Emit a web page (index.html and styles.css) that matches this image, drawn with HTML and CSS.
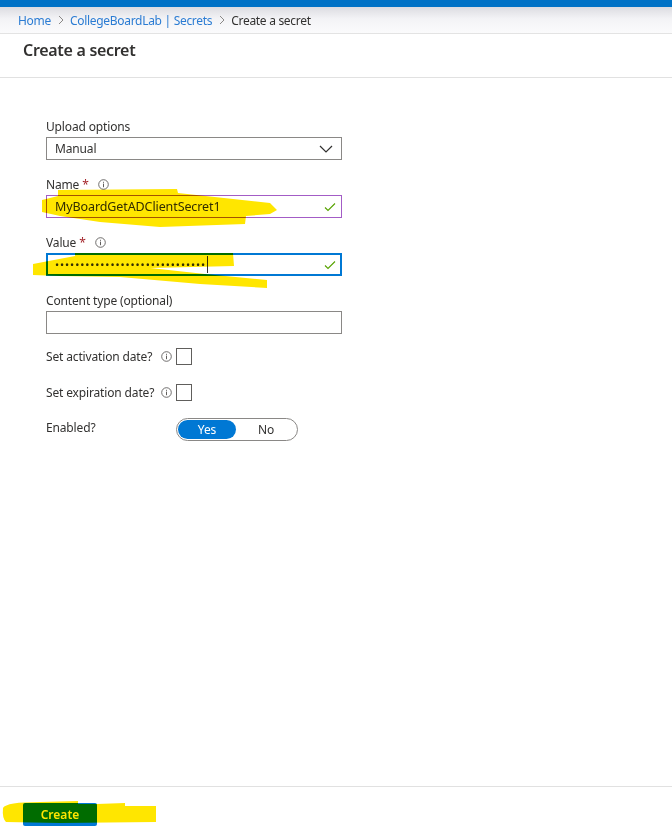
FILE: index.html
```html
<!DOCTYPE html>
<html>
<head>
<meta charset="utf-8">
<link rel="stylesheet" href="styles.css">
</head>
<body>
<div class="page">
  <div class="topbar"></div>
  <nav class="breadcrumb">
    <a class="crumb">Home</a>
    <svg class="sep" width="8" height="10" viewBox="0 0 8 10"><path d="M2 1l4 4-4 4" fill="none" stroke="#8a8886" stroke-width="1"/></svg>
    <a class="crumb">CollegeBoardLab | Secrets</a>
    <svg class="sep" width="8" height="10" viewBox="0 0 8 10"><path d="M2 1l4 4-4 4" fill="none" stroke="#8a8886" stroke-width="1"/></svg>
    <span class="current">Create a secret</span>
  </nav>
  <header class="header">
    <h1 class="title">Create a secret</h1>
  </header>
  <main class="form">
    <div class="field">
      <label class="label">Upload options</label>
      <div class="input select">
        <span>Manual</span>
        <svg width="14" height="8" viewBox="0 0 14 8"><path d="M1 1l6 6 6-6" fill="none" stroke="#323130" stroke-width="1.2"/></svg>
      </div>
    </div>
    <div class="field">
      <label class="label">Name <span class="req">*</span> <svg class="info" width="11" height="11" viewBox="0 0 11 11"><circle cx="5.5" cy="5.5" r="4.8" fill="none" stroke="#605e5c" stroke-width="0.9"/><rect x="5" y="4.6" width="1" height="3.6" fill="#605e5c"/><rect x="5" y="2.8" width="1" height="1" fill="#605e5c"/></svg></label>
      <div class="input name">
        <span>MyBoardGetADClientSecret1</span>
        <svg width="12" height="10" viewBox="0 0 12 10"><path d="M1 5.5l3 3 7-7" fill="none" stroke="#57a300" stroke-width="1.1"/></svg>
      </div>
    </div>
    <div class="field">
      <label class="label">Value <span class="req">*</span> <svg class="info" width="11" height="11" viewBox="0 0 11 11"><circle cx="5.5" cy="5.5" r="4.8" fill="none" stroke="#605e5c" stroke-width="0.9"/><rect x="5" y="4.6" width="1" height="3.6" fill="#605e5c"/><rect x="5" y="2.8" width="1" height="1" fill="#605e5c"/></svg></label>
      <div class="input value">
        <span class="dots">••••••••••••••••••••••••••••••</span><span class="caret"></span>
        <svg class="check" width="12" height="10" viewBox="0 0 12 10"><path d="M1 5.5l3 3 7-7" fill="none" stroke="#57a300" stroke-width="1.1"/></svg>
      </div>
    </div>
    <div class="field">
      <label class="label">Content type (optional)</label>
      <div class="input"></div>
    </div>
    <div class="row first">
      <div class="rowlabel"><span>Set activation date?</span><svg class="info" width="11" height="11" viewBox="0 0 11 11"><circle cx="5.5" cy="5.5" r="4.8" fill="none" stroke="#605e5c" stroke-width="0.9"/><rect x="5" y="4.6" width="1" height="3.6" fill="#605e5c"/><rect x="5" y="2.8" width="1" height="1" fill="#605e5c"/></svg></div>
      <div class="checkbox"></div>
    </div>
    <div class="row">
      <div class="rowlabel"><span>Set expiration date?</span><svg class="info" width="11" height="11" viewBox="0 0 11 11"><circle cx="5.5" cy="5.5" r="4.8" fill="none" stroke="#605e5c" stroke-width="0.9"/><rect x="5" y="4.6" width="1" height="3.6" fill="#605e5c"/><rect x="5" y="2.8" width="1" height="1" fill="#605e5c"/></svg></div>
      <div class="checkbox"></div>
    </div>
    <div class="row toggle-row">
      <div class="rowlabel"><span>Enabled?</span></div>
      <div class="toggle"><span class="opt on">Yes</span><span class="opt">No</span></div>
    </div>
  </main>
  <footer class="footer">
    <button class="create">Create</button>
  </footer>
  <svg class="marker" width="672" height="838" viewBox="0 0 672 838">
    <path d="M58 190 L177 189 L178 193 L270 203 L277 210 L270 214 L246 216 L245 224 L160 227 L100 222 L60 216 L42 212 L42 200 L58 196 Z" fill="#ffe600"/>
    <path d="M33 264 L75 256 L75 253 L233 253 L234 266 L150 268 L205 274 L267 280 L267 288 L200 284 L120 277 L60 276 L33 275 Z" fill="#ffe600"/>
    <path d="M3 808 Q6 802 40 802 L78 801 L78 804 L97 804 L125 803 L125 806 L156 806 L156 822 L60 823 L6 822 Q2 818 3 808 Z" fill="#ffe600"/>
  </svg>
</div>
</body>
</html>
```
FILE: styles.css
```css
* { box-sizing: border-box; }
html, body { margin: 0; padding: 0; }
body {
  font-family: "Noto Sans", "Open Sans", sans-serif;
  color: #323130;
  background: #fff;
}
.page {
  position: relative;
  min-height: 838px;
  display: flex;
  flex-direction: column;
}
.topbar {
  height: 7px;
  background: #0072c6;
}
.breadcrumb {
  height: 27px;
  display: flex;
  align-items: center;
  padding-left: 18px;
  font-size: 12px;
  background: linear-gradient(#dcdce1, #f3f3f6 45%, #fbfbfc);
  border-bottom: 1px solid #e3e3e3;
  letter-spacing: -0.3px;
}
.crumb { color: #2b7cd3; }
.current { color: #323130; }
.sep { margin: 0 5px 0 6px; }
.header {
  height: 44px;
  border-bottom: 1px solid #e1e1e1;
  padding-left: 23px;
}
.title {
  margin: 0;
  padding-top: 6px;
  font-size: 16px;
  font-weight: 600;
  color: #323130;
  line-height: 20px;
  letter-spacing: -0.3px;
}
.form {
  flex: 1;
  padding: 40px 0 0 46px;
  display: flex;
  flex-direction: column;
  font-size: 12px;
  letter-spacing: -0.15px;
}
.field {
  width: 296px;
  display: flex;
  flex-direction: column;
  gap: 2px;
  margin-bottom: 16px;
}
.field:nth-child(4) { margin-bottom: 14px; }
.label {
  height: 17px;
  line-height: 17px;
  display: flex;
  align-items: center;
  gap: 3px;
}
.label .info { margin-left: 6px; }
.req { color: #a4262c; }
.input {
  height: 23px;
  border: 1px solid #8a8886;
  display: flex;
  align-items: center;
  padding: 0 4px 0 8px;
  justify-content: space-between;
  background: #fff;
}
.name span { font-size: 12.5px; letter-spacing: -0.1px; }
.select svg { margin-right: 4px; }
.name { border-color: #a35cc6; }
.name svg { margin-right: 1px; }
.value {
  border: 2px solid #0078d4;
  padding-left: 7px;
  justify-content: flex-start;
}
.dots {
  font-size: 11px;
  letter-spacing: 0.9px;
  color: #323130;
}
.caret {
  width: 1px;
  height: 17px;
  background: #323130;
  margin-left: 1px;
}
.value .check { margin-left: auto; margin-right: 0; }
.row {
  display: grid;
  grid-template-columns: 130px auto;
  align-items: center;
  height: 17px;
  margin-bottom: 19px;
}
.rowlabel {
  display: flex;
  align-items: center;
  justify-content: space-between;
  padding-right: 4px;
}
.checkbox {
  width: 16px;
  height: 17px;
  border: 1px solid #605e5c;
}
.toggle-row {
  height: 23px;
  margin-top: -2px;
  align-items: start;
}
.toggle-row .rowlabel { padding-top: 1px; }
.toggle {
  width: 122px;
  height: 23px;
  border: 1px solid #8a8886;
  border-radius: 12px;
  display: flex;
  padding: 1px;
}
.opt {
  flex: 1;
  display: flex;
  align-items: center;
  justify-content: center;
  border-radius: 10px;
  color: #323130;
}
.opt.on {
  background: #0078d4;
  color: #fff;
  flex: 0 0 58px;
}
.footer {
  height: 52px;
  border-top: 1px solid #e1e1e1;
  padding: 15px 0 0 23px;
}
.create {
  width: 74px;
  height: 23px;
  background: #0078d4;
  color: #fff;
  border: none;
  border-radius: 2px;
  font-family: "Noto Sans", sans-serif;
  font-size: 12px;
  font-weight: 600;
  padding: 0;
}
.marker {
  position: absolute;
  left: 0;
  top: 0;
  mix-blend-mode: multiply;
  pointer-events: none;
}
```
